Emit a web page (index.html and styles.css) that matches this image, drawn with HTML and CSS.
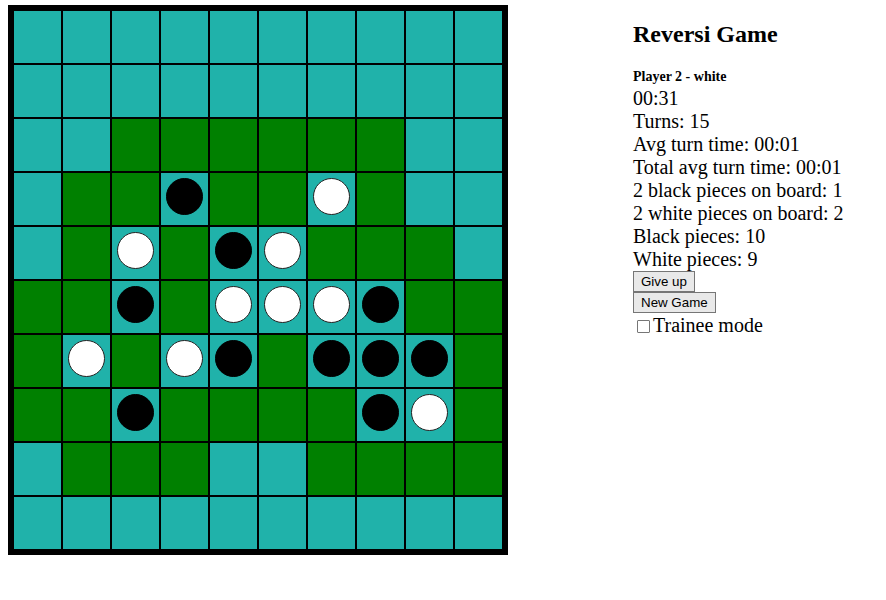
FILE: index.html
```html
<!DOCTYPE html>
<html>
<head>
<meta charset="utf-8">
<title>Reversi Game</title>
<link rel="stylesheet" href="styles.css">
</head>
<body>
<div class="page">
  <div class="board">
    <div class="cell teal"></div><div class="cell teal"></div><div class="cell teal"></div><div class="cell teal"></div><div class="cell teal"></div><div class="cell teal"></div><div class="cell teal"></div><div class="cell teal"></div><div class="cell teal"></div><div class="cell teal"></div>
    <div class="cell teal"></div><div class="cell teal"></div><div class="cell teal"></div><div class="cell teal"></div><div class="cell teal"></div><div class="cell teal"></div><div class="cell teal"></div><div class="cell teal"></div><div class="cell teal"></div><div class="cell teal"></div>
    <div class="cell teal"></div><div class="cell teal"></div><div class="cell green"></div><div class="cell green"></div><div class="cell green"></div><div class="cell green"></div><div class="cell green"></div><div class="cell green"></div><div class="cell teal"></div><div class="cell teal"></div>
    <div class="cell teal"></div><div class="cell green"></div><div class="cell green"></div><div class="cell teal"><span class="disc black"></span></div><div class="cell green"></div><div class="cell green"></div><div class="cell teal"><span class="disc white"></span></div><div class="cell green"></div><div class="cell teal"></div><div class="cell teal"></div>
    <div class="cell teal"></div><div class="cell green"></div><div class="cell teal"><span class="disc white"></span></div><div class="cell green"></div><div class="cell teal"><span class="disc black"></span></div><div class="cell teal"><span class="disc white"></span></div><div class="cell green"></div><div class="cell green"></div><div class="cell green"></div><div class="cell teal"></div>
    <div class="cell green"></div><div class="cell green"></div><div class="cell teal"><span class="disc black"></span></div><div class="cell green"></div><div class="cell teal"><span class="disc white"></span></div><div class="cell teal"><span class="disc white"></span></div><div class="cell teal"><span class="disc white"></span></div><div class="cell teal"><span class="disc black"></span></div><div class="cell green"></div><div class="cell green"></div>
    <div class="cell green"></div><div class="cell teal"><span class="disc white"></span></div><div class="cell green"></div><div class="cell teal"><span class="disc white"></span></div><div class="cell teal"><span class="disc black"></span></div><div class="cell green"></div><div class="cell teal"><span class="disc black"></span></div><div class="cell teal"><span class="disc black"></span></div><div class="cell teal"><span class="disc black"></span></div><div class="cell green"></div>
    <div class="cell green"></div><div class="cell green"></div><div class="cell teal"><span class="disc black"></span></div><div class="cell green"></div><div class="cell green"></div><div class="cell green"></div><div class="cell green"></div><div class="cell teal"><span class="disc black"></span></div><div class="cell teal"><span class="disc white"></span></div><div class="cell green"></div>
    <div class="cell teal"></div><div class="cell green"></div><div class="cell green"></div><div class="cell green"></div><div class="cell teal"></div><div class="cell teal"></div><div class="cell green"></div><div class="cell green"></div><div class="cell green"></div><div class="cell green"></div>
    <div class="cell teal"></div><div class="cell teal"></div><div class="cell teal"></div><div class="cell teal"></div><div class="cell teal"></div><div class="cell teal"></div><div class="cell teal"></div><div class="cell teal"></div><div class="cell teal"></div><div class="cell teal"></div>
  </div>
  <div class="panel">
    <h2 class="title">Reversi Game</h2>
    <h5 class="player">Player 2 - white</h5>
    <div class="stats">
      <div class="line">00:31</div>
      <div class="line">Turns: 15</div>
      <div class="line">Avg turn time: 00:01</div>
      <div class="line">Total avg turn time: 00:01</div>
      <div class="line">2 black pieces on board: 1</div>
      <div class="line">2 white pieces on board: 2</div>
      <div class="line">Black pieces: 10</div>
      <div class="line">White pieces: 9</div>
    </div>
    <div class="actions">
      <button class="btn">Give up</button>
      <button class="btn">New Game</button>
    </div>
    <label class="trainee"><input type="checkbox" class="check">Trainee mode</label>
  </div>
</div>
</body>
</html>
```

FILE: styles.css
```css
html, body {
  margin: 0;
  padding: 0;
  background: #ffffff;
}

body {
  font-family: "Liberation Serif", "Times New Roman", serif;
  color: #000000;
}

.page {
  display: flex;
  align-items: flex-start;
}

.board {
  margin: 5px 0 0 8px;
  display: grid;
  grid-template-columns: repeat(10, 49px);
  grid-template-rows: repeat(10, 54px);
  border: 5px solid #000000;
  background: #000000;
}

.cell {
  box-sizing: border-box;
  border: 1px solid #000000;
  display: flex;
  justify-content: center;
  align-items: flex-start;
  padding-top: 5px;
}

.teal {
  background: #20b2aa;
}

.green {
  background: #008000;
}

.disc {
  display: block;
  box-sizing: border-box;
  width: 37px;
  height: 37px;
  border-radius: 50%;
  border: 1px solid #000000;
}

.disc.black {
  background: #000000;
}

.disc.white {
  background: #ffffff;
  border-color: #222222;
}

.panel {
  margin-left: 125px;
  display: flex;
  flex-direction: column;
  align-items: flex-start;
}

.title {
  margin: 21px 0 0 0;
  font-size: 24px;
  line-height: 27px;
  font-weight: bold;
}

.player {
  margin: 20px 0 2px 0;
  font-size: 14px;
  line-height: 17px;
  font-weight: bold;
}

.stats {
  display: flex;
  flex-direction: column;
}

.line {
  font-size: 20px;
  line-height: 23px;
  white-space: nowrap;
}

.actions {
  margin-top: 0;
  display: flex;
  flex-direction: column;
  align-items: flex-start;
}

.btn {
  box-sizing: border-box;
  height: 21px;
  margin: 0;
  padding: 0 7px;
  font-family: "Liberation Sans", Arial, sans-serif;
  font-size: 13.33px;
  line-height: 15px;
  color: #000000;
  background: #e9e9e9;
  border: 1px solid #767676;
  border-radius: 0;
}

.trainee {
  font-size: 20px;
  line-height: 24px;
  white-space: nowrap;
}

.check {
  appearance: none;
  -webkit-appearance: none;
  box-sizing: border-box;
  width: 13px;
  height: 13px;
  margin: 0 3px 0 4px;
  vertical-align: -1px;
  border: 1px solid #767676;
  background: #ffffff;
  border-radius: 1px;
}
```
